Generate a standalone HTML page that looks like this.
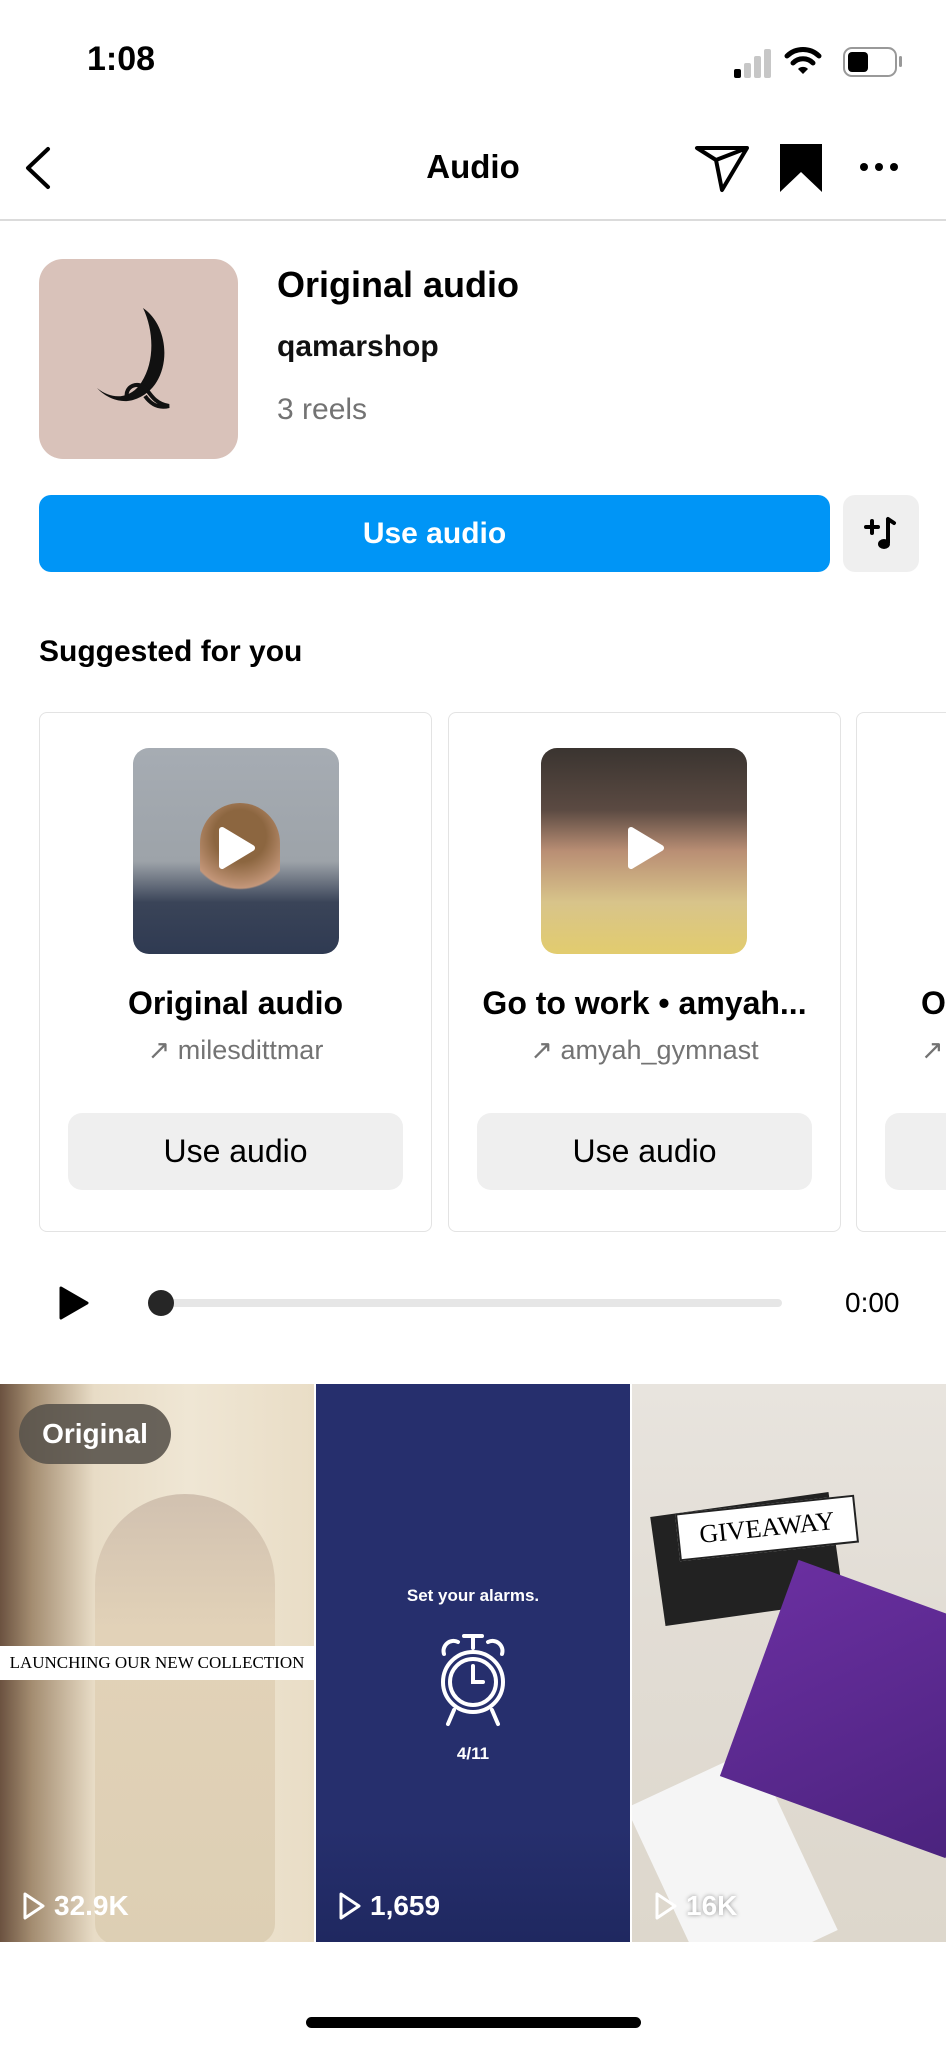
<!DOCTYPE html>
<html><head><meta charset="utf-8"><style>
*{margin:0;padding:0;box-sizing:border-box}
html,body{width:946px;height:2048px;overflow:hidden}
body{background:#fff;font-family:"Liberation Sans",sans-serif;color:#000;position:relative}
.a{position:absolute}
.t{white-space:nowrap}
.card{position:absolute;top:712px;width:393px;height:520px;border:1.5px solid #e3e3e3;border-radius:8px;background:#fff;overflow:hidden}
.btn{position:absolute;left:28px;top:400px;width:335px;height:77px;background:#efefef;border-radius:14px;font-size:32px;text-align:center;line-height:77px}
.ct{position:absolute;left:0;width:100%;text-align:center;top:272px;font-size:32px;font-weight:bold;white-space:nowrap}
.cs{position:absolute;left:0;width:100%;text-align:center;top:322px;font-size:27px;color:#737373;white-space:nowrap}
.views{position:absolute;bottom:20px;left:22px;color:#fff;font-size:28px;font-weight:bold;display:flex;align-items:center;gap:8px}
</style></head><body>
<!-- status bar -->
<div class="a t" style="left:87px;top:40px;font-size:34px;font-weight:bold">1:08</div>
<div class="a" style="left:734px;top:69px;width:7px;height:9px;background:#000;border-radius:2px"></div>
<div class="a" style="left:744px;top:63px;width:7px;height:15px;background:#c7c7c7;border-radius:2px"></div>
<div class="a" style="left:754px;top:56px;width:7px;height:22px;background:#c7c7c7;border-radius:2px"></div>
<div class="a" style="left:764px;top:49px;width:7px;height:29px;background:#c7c7c7;border-radius:2px"></div>
<svg class="a" style="left:784px;top:46px" width="38" height="30" viewBox="0 0 38 30"><path d="M3 10a23 23 0 0 1 32 0" stroke="#000" stroke-width="5" fill="none" stroke-linecap="round"/><path d="M9 17a14 14 0 0 1 20 0" stroke="#000" stroke-width="5" fill="none" stroke-linecap="round"/><path d="M14 23l5 5 5-5a7 7 0 0 0-10 0z" fill="#000"/></svg>
<div class="a" style="left:843px;top:47px;width:54px;height:30px;border:2.5px solid #999;border-radius:9px"></div>
<div class="a" style="left:848px;top:52px;width:20px;height:20px;background:#000;border-radius:4px"></div>
<div class="a" style="left:899px;top:56px;width:3px;height:11px;background:#999;border-radius:2px"></div>
<!-- nav -->
<svg class="a" style="left:20px;top:145px" width="34" height="46" viewBox="0 0 34 46"><path d="M28 4L8 23l20 19" stroke="#000" stroke-width="4" fill="none" stroke-linecap="round" stroke-linejoin="round"/></svg>
<div class="a t" style="left:0;width:946px;text-align:center;top:148px;font-size:33px;font-weight:bold">Audio</div>
<svg class="a" style="left:694px;top:144px" width="56" height="50" viewBox="0 0 56 50"><path d="M3 4h50L28 46 22 16zM22 16L53 4" stroke="#000" stroke-width="4" fill="none" stroke-linejoin="round"/></svg>
<svg class="a" style="left:778px;top:142px" width="46" height="52" viewBox="0 0 46 52"><path d="M2 2h42v48L23 30 2 50z" fill="#000"/></svg>
<div class="a" style="left:860px;top:163px;width:8px;height:8px;border-radius:50%;background:#000;box-shadow:15px 0 0 #000,30px 0 0 #000"></div>
<div class="a" style="left:0;top:219px;width:946px;height:1.5px;background:#dbdbdb"></div>
<!-- header -->
<div class="a" style="left:39px;top:259px;width:199px;height:200px;background:#d9c2ba;border-radius:24px"></div>
<svg class="a" style="left:80px;top:300px" width="120" height="120" viewBox="0 0 120 120"><path d="M63 8c30 20 30 80-10 92-10 3-25 0-36-12 15 12 30 10 40 0 18-20 18-55 6-80z" fill="#111"/><path d="M47 98c-3-12 12-18 20-8 5 7 10 14 22 16-12 3-19-3-24-10" stroke="#111" stroke-width="4" fill="none"/></svg>
<div class="a t" style="left:277px;top:264px;font-size:36px;font-weight:bold">Original audio</div>
<div class="a t" style="left:277px;top:330px;font-size:30px;font-weight:bold;color:#111">qamarshop</div>
<div class="a t" style="left:277px;top:393px;font-size:30px;color:#737373">3 reels</div>
<div class="a" style="left:39px;top:495px;width:791px;height:77px;background:#0095f6;border-radius:12px;color:#fff;font-size:30px;font-weight:bold;text-align:center;line-height:77px">Use audio</div>
<div class="a" style="left:843px;top:495px;width:76px;height:77px;background:#efefef;border-radius:12px"></div>
<svg class="a" style="left:862px;top:515px" width="40" height="38" viewBox="0 0 40 38"><path d="M4 12h12M10 6v12" stroke="#000" stroke-width="4" stroke-linecap="round"/><path d="M26 4v24" stroke="#000" stroke-width="4"/><path d="M26 4l6 4" stroke="#000" stroke-width="4" stroke-linecap="round"/><ellipse cx="22" cy="29" rx="6" ry="5" fill="#000"/></svg>
<div class="a t" style="left:39px;top:635px;font-size:30px;font-weight:bold">Suggested for you</div>
<!-- cards -->
<div class="card" style="left:39px">
  <div class="a" style="left:93px;top:35px;width:206px;height:206px;border-radius:16px;background:linear-gradient(180deg,#a6acb3 0%,#9da3a9 55%,#3a4458 75%,#2f3a52 100%)"></div>
  <div class="a" style="left:160px;top:90px;width:80px;height:110px;border-radius:40px;background:radial-gradient(circle at 50% 30%,#8c6640 30%,#c4977a 60%,transparent 62%)"></div>
  <svg class="a" style="left:176px;top:113px" width="40" height="44" viewBox="0 0 40 44"><path d="M6 4l30 18L6 40z" fill="#fff" stroke="#fff" stroke-width="6" stroke-linejoin="round"/></svg>
  <div class="ct">Original audio</div>
  <div class="cs">↗ milesdittmar</div>
  <div class="btn">Use audio</div>
</div>
<div class="card" style="left:448px">
  <div class="a" style="left:92px;top:35px;width:206px;height:206px;border-radius:16px;background:linear-gradient(180deg,#3a3430 0%,#5b4a42 30%,#b98e74 50%,#d8c48a 75%,#e2cc6e 100%)"></div>
  <svg class="a" style="left:176px;top:113px" width="40" height="44" viewBox="0 0 40 44"><path d="M6 4l30 18L6 40z" fill="#fff" stroke="#fff" stroke-width="6" stroke-linejoin="round"/></svg>
  <div class="ct">Go to work • amyah...</div>
  <div class="cs">↗ amyah_gymnast</div>
  <div class="btn">Use audio</div>
</div>
<div class="card" style="left:856px;width:90px;border-right:none;border-radius:8px 0 0 8px">
  <div class="a t" style="left:64px;top:272px;font-size:32px;font-weight:bold">O</div>
  <div class="a t" style="left:64px;top:322px;font-size:27px;color:#737373">↗</div>
  <div class="a" style="left:28px;top:400px;width:200px;height:77px;background:#efefef;border-radius:14px"></div>
</div>
<!-- player -->
<svg class="a" style="left:58px;top:1285px" width="32" height="36" viewBox="0 0 32 36"><path d="M3 3l26 15L3 33z" fill="#000" stroke="#000" stroke-width="3" stroke-linejoin="round"/></svg>
<div class="a" style="left:162px;top:1299px;width:620px;height:8px;background:#e6e6e6;border-radius:4px"></div>
<div class="a" style="left:148px;top:1290px;width:26px;height:26px;background:#262626;border-radius:50%"></div>
<div class="a t" style="left:845px;top:1287px;font-size:28px">0:00</div>
<!-- grid -->
<div class="a" style="left:0;top:1384px;width:314px;height:558px;overflow:hidden;background:linear-gradient(90deg,#6b5240 0%,#a38c70 10%,#e8dcc6 30%,#efe6d4 60%,#e9ddc6 100%)">
  <div class="a" style="left:95px;top:110px;width:180px;height:450px;border-radius:90px 90px 20px 20px;background:linear-gradient(180deg,#d1c1b0 0%,#e2d2b8 30%,#ddcfb4 100%)"></div>
  <div class="a" style="left:0;top:262px;width:100%;height:34px;background:#fff;font-family:'Liberation Serif',serif;font-size:17px;text-align:center;line-height:34px;white-space:nowrap">LAUNCHING OUR NEW COLLECTION</div>
  <div class="a t" style="left:19px;top:20px;height:60px;width:152px;background:rgba(90,84,76,.9);border-radius:30px;color:#fff;font-size:28px;font-weight:bold;text-align:center;line-height:60px">Original</div>
  <div class="views"><svg width="24" height="30" viewBox="0 0 24 30"><path d="M3 3l18 12L3 27z" fill="none" stroke="#fff" stroke-width="3" stroke-linejoin="round"/></svg>32.9K</div>
</div>
<div class="a" style="left:316px;top:1384px;width:314px;height:558px;background:linear-gradient(180deg,#262f6d 0%,#262f6d 80%,#1f2860 100%)">
  <div class="a t" style="left:0;width:100%;text-align:center;top:202px;color:#fff;font-size:17px;font-weight:bold">Set your alarms.</div>
  <svg class="a" style="left:118px;top:248px" width="78" height="96" viewBox="0 0 78 96"><g stroke="#fff" stroke-width="4" fill="none" stroke-linecap="round"><circle cx="39" cy="50" r="30"/><circle cx="39" cy="50" r="23"/><path d="M39 34v16h10M30 4h18M39 4v12M10 22a10 10 0 0 1 14-12M68 22a10 10 0 0 0-14-12M20 78l-6 14M58 78l6 14"/></g></svg>
  <div class="a t" style="left:0;width:100%;text-align:center;top:360px;color:#fff;font-size:17px;font-weight:bold">4/11</div>
  <div class="views"><svg width="24" height="30" viewBox="0 0 24 30"><path d="M3 3l18 12L3 27z" fill="none" stroke="#fff" stroke-width="3" stroke-linejoin="round"/></svg>1,659</div>
</div>
<div class="a" style="left:632px;top:1384px;width:314px;height:558px;overflow:hidden;background:linear-gradient(180deg,#e8e4de 0%,#e2ddd5 40%,#ddd7cc 100%)">
  <div class="a" style="left:25px;top:120px;width:180px;height:110px;background:#222;transform:rotate(-8deg)"></div>
  <div class="a" style="left:30px;top:385px;width:140px;height:200px;background:#f5f5f5;transform:rotate(-25deg)"></div>
  <div class="a" style="left:120px;top:210px;width:240px;height:230px;background:linear-gradient(135deg,#6a2fa0,#4b237e);transform:rotate(20deg)"></div>
  <div class="a" style="left:45px;top:120px;width:180px;height:48px;background:#fff;border:2px solid #222;transform:rotate(-6deg);font-size:26px;text-align:center;line-height:44px;font-family:'Liberation Serif',serif">GIVEAWAY</div>
  <div class="views" style="text-shadow:0 0 4px rgba(0,0,0,.4)"><svg width="24" height="30" viewBox="0 0 24 30"><path d="M3 3l18 12L3 27z" fill="none" stroke="#fff" stroke-width="3" stroke-linejoin="round"/></svg>16K</div>
</div>
<div class="a" style="left:306px;top:2017px;width:335px;height:11px;background:#000;border-radius:6px"></div>
</body></html>
